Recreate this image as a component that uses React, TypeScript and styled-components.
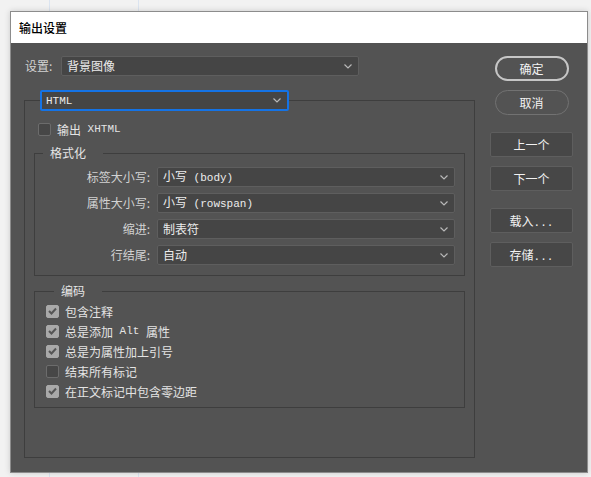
import styled, { createGlobalStyle } from "styled-components";

const GlobalStyle = createGlobalStyle`
  html, body {
    margin: 0;
    padding: 0;
  }
  body {
    width: 591px;
    height: 477px;
    overflow: hidden;
    background-color: #f2f2f2;
    background-image: linear-gradient(
      to right,
      transparent 49px, #dbe4f0 49px, #dbe4f0 50px, transparent 50px,
      transparent 138px, #dbe4f0 138px, #dbe4f0 139px, transparent 139px
    );
    font-family: "Noto Sans CJK SC", "Noto Sans", sans-serif;
    font-size: 12px;
  }
`

const Dialog = styled.div`
  margin: 11px 0 0 10px;
  width: 578px;
  height: 462px;
  box-sizing: border-box;
  border: 1px solid #8c8c8c;
  box-shadow: 0 0 6px rgba(0, 0, 0, 0.16);
  background-color: #535353;
  display: flex;
  flex-direction: column;
`

const TitleBar = styled.div`
  height: 31px;
  background-color: #ffffff;
  color: #000;
  display: flex;
  align-items: center;
  padding-left: 8px;
  font-size: 12px;
  font-weight: 500;
`

const Body = styled.div`
  flex: 1;
  display: flex;
  padding: 13px 0 0 13px;
`

const LeftColumn = styled.div`
  width: 451px;
  display: flex;
  flex-direction: column;
`

const RightColumn = styled.div`
  width: 83px;
  margin-left: 15px;
  display: flex;
  flex-direction: column;
  align-items: center;
`

const Mono = styled.span`
  font-family: "Liberation Mono", "DejaVu Sans Mono", monospace;
  font-size: 11px;
  white-space: pre;
`

const SettingsRow = styled.div`
  display: flex;
  align-items: center;
  height: 20px;
`

const FieldLabel = styled.span`
  color: #d2d2d2;
  line-height: 20px;
`

const SettingsLabel = styled(FieldLabel)`
  width: 36px;
  padding-left: 1px;
`

interface DropdownProps {
  $width: number
  $focused?: boolean
}

const Dropdown = styled.div<DropdownProps>`
  width: ${({$width}) => $width}px;
  height: ${({$focused}) => $focused ? 21 : 20}px;
  box-sizing: border-box;
  display: flex;
  align-items: center;
  justify-content: space-between;
  padding: 0 6px 0 ${({$focused}) => $focused ? 4 : 5}px;
  background-color: #454545;
  border: ${({$focused}) => $focused ? "2px solid #1473e6" : "1px solid #5e5e5e"};
  border-radius: 2px;
  color: #ececec;
  line-height: 18px;
  white-space: nowrap;
`

const Frame = styled.fieldset`
  margin: 0;
  padding: 0 9px;
  min-width: 0;
  border: 1px solid #3e3e3e;
`

const OuterFrame = styled(Frame)`
  margin-top: 14px;
  height: 368px;
  box-sizing: border-box;
`

const FocusLegend = styled.legend`
  margin-left: 6px;
  padding: 0;
`

const GroupLegend = styled.legend`
  margin-left: 8px;
  padding: 0 17px 0 7px;
  color: #e6e6e6;
  line-height: 16px;
`

const FormatFrame = styled(Frame)`
  margin-top: 8px;
  padding: 6px 8px 10px 0;
`

const EncodingFrame = styled(Frame)`
  margin-top: 7px;
  padding: 2px 0 6px 11px;
`

const FormatGrid = styled.div`
  display: grid;
  grid-template-columns: 115px 298px;
  column-gap: 7px;
  row-gap: 6px;
  align-items: center;
`

const RowLabel = styled(FieldLabel)`
  text-align: right;
`

const CheckRow = styled.label<{ $indent?: number }>`
  display: flex;
  align-items: center;
  height: 20px;
  margin-left: ${({$indent}) => $indent ?? 0}px;
  color: #e4e4e4;
  white-space: nowrap;
`

const TopCheckRow = styled(CheckRow)`
  margin-top: 10px;
  height: 16px;
`

const Box = styled.span<{ $checked?: boolean }>`
  width: 13px;
  height: 13px;
  box-sizing: border-box;
  margin-right: 6px;
  border-radius: 2px;
  display: flex;
  align-items: center;
  justify-content: center;
  background-color: ${({$checked}) => $checked ? "#a9a9a9" : "#474747"};
  border: 1px solid ${({$checked}) => $checked ? "#a9a9a9" : "#6c6c6c"};
`

const PillButton = styled.button<{ $primary?: boolean }>`
  width: 74px;
  height: 25px;
  box-sizing: border-box;
  border-radius: 13px;
  border: ${({$primary}) => $primary ? "2px solid #c6c6c6" : "1.5px solid #727272"};
  background-color: #535353;
  color: #f2f2f2;
  font-family: inherit;
  font-size: 12px;
  padding: 0;
  margin-bottom: 9px;
`

const RectButton = styled.button<{ $gapBefore?: number }>`
  width: 83px;
  height: 25px;
  box-sizing: border-box;
  margin-top: ${({$gapBefore}) => $gapBefore ?? 9}px;
  border-radius: 2px;
  border: 1px solid #5e5e5e;
  background-color: #474747;
  color: #f2f2f2;
  font-family: inherit;
  font-size: 12px;
  padding: 0;
`

function Chevron() {
  return (
    <svg width="8" height="5" viewBox="0 0 8 5">
      <polyline points="0.5,0.5 4,4 7.5,0.5" fill="none" stroke="#b8b8b8" strokeWidth="1.2" />
    </svg>
  )
}

function Check({ checked }: { checked?: boolean }) {
  return (
    <Box $checked={checked}>
      {checked && (
        <svg width="9" height="8" viewBox="0 0 9 8">
          <polyline points="1,4 3.5,6.5 8,1.5" fill="none" stroke="#565656" strokeWidth="2" />
        </svg>
      )}
    </Box>
  )
}

const formatRows: [string, React.ReactNode][] = [
  ["标签大小写:", <>小写<Mono> (body)</Mono></>],
  ["属性大小写:", <>小写<Mono> (rowspan)</Mono></>],
  ["缩进:", "制表符"],
  ["行结尾:", "自动"],
]

const encodingRows: [React.ReactNode, boolean][] = [
  ["包含注释", true],
  [<>总是添加<Mono> Alt </Mono>属性</>, true],
  ["总是为属性加上引号", true],
  ["结束所有标记", false],
  ["在正文标记中包含零边距", true],
]

export default function App() {
  return (
    <>
      <GlobalStyle />
      <Dialog>
        <TitleBar>输出设置</TitleBar>
        <Body>
          <LeftColumn>
            <SettingsRow>
              <SettingsLabel>设置:</SettingsLabel>
              <Dropdown $width={298}>
                <span>背景图像</span>
                <Chevron />
              </Dropdown>
            </SettingsRow>
            <OuterFrame>
              <FocusLegend>
                <Dropdown $width={249} $focused>
                  <Mono>HTML</Mono>
                  <Chevron />
                </Dropdown>
              </FocusLegend>
              <TopCheckRow $indent={4}>
                <Check />
                输出<Mono> XHTML</Mono>
              </TopCheckRow>
              <FormatFrame>
                <GroupLegend>格式化</GroupLegend>
                <FormatGrid>
                  {formatRows.map(([label, value], i) => (
                    <>
                      <RowLabel key={"l" + i}>{label}</RowLabel>
                      <Dropdown key={"d" + i} $width={298}>
                        <span>{value}</span>
                        <Chevron />
                      </Dropdown>
                    </>
                  ))}
                </FormatGrid>
              </FormatFrame>
              <EncodingFrame>
                <GroupLegend>编码</GroupLegend>
                {encodingRows.map(([text, checked], i) => (
                  <CheckRow key={i}>
                    <Check checked={checked} />
                    {text}
                  </CheckRow>
                ))}
              </EncodingFrame>
            </OuterFrame>
          </LeftColumn>
          <RightColumn>
            <PillButton $primary>确定</PillButton>
            <PillButton>取消</PillButton>
            <RectButton $gapBefore={8}>上一个</RectButton>
            <RectButton>下一个</RectButton>
            <RectButton $gapBefore={17}>载入<Mono>...</Mono></RectButton>
            <RectButton>存储<Mono>...</Mono></RectButton>
          </RightColumn>
        </Body>
      </Dialog>
    </>
  )
}
